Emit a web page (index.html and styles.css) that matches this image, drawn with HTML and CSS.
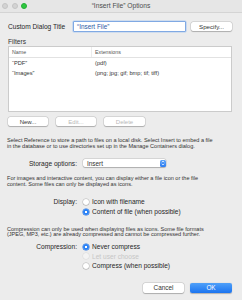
FILE: index.html
```html
<!DOCTYPE html>
<html>
<head>
<meta charset="utf-8">
<link rel="stylesheet" href="styles.css">
</head>
<body>
<div class="dialog">
  <div class="titlebar">
    <div class="lights">
      <span class="light grey"></span>
      <span class="light grey"></span>
      <span class="light green"></span>
    </div>
    <div class="title">“Insert File” Options</div>
    <div></div>
  </div>
  <div class="content">
    <div class="row-title">
      <span class="label">Custom Dialog Title</span>
      <span class="field"><span class="field-text">“Insert File”</span></span>
      <span class="btn specify">Specify...</span>
    </div>
    <div class="section">Filters</div>
    <div class="list">
      <div class="list-head">
        <span class="cell head-name">Name</span>
        <span class="cell">Extensions</span>
      </div>
      <div class="list-row">
        <span class="cell">“PDF”</span>
        <span class="cell">(pdf)</span>
      </div>
      <div class="list-row">
        <span class="cell">“Images”</span>
        <span class="cell">(png; jpg; gif; bmp; tif; tiff)</span>
      </div>
    </div>
    <div class="list-buttons">
      <span class="btn small">New...</span>
      <span class="btn small disabled">Edit...</span>
      <span class="btn small disabled wide">Delete</span>
    </div>
    <p class="note note1">Select Reference to store a path to files on a local disk. Select Insert to embed a file<br>in the database or to use directories set up in the Manage Containers dialog.</p>
    <div class="form-row storage">
      <span class="form-label">Storage options:</span>
      <span class="popup"><span class="popup-text">Insert</span><span class="stepper"><svg width="4" height="6" viewBox="0 0 4 6"><path d="M0.8 2.2 L2 1 L3.2 2.2 M0.8 3.8 L2 5 L3.2 3.8" fill="none" stroke="#fff" stroke-width="0.7"/></svg></span></span>
    </div>
    <p class="note note2">For images and interactive content, you can display either a file icon or the file<br>content. Some files can only be displayed as icons.</p>
    <div class="form-row radios display">
      <span class="form-label">Display:</span>
      <div class="radio-list">
        <span class="radio"><span class="dot"></span>Icon with filename</span>
        <span class="radio on"><span class="dot"></span>Content of file (when possible)</span>
      </div>
    </div>
    <p class="note note3">Compression can only be used when displaying files as icons. Some file formats<br>(JPEG, MP3, etc.) are already compressed and cannot be compressed further.</p>
    <div class="form-row radios compression">
      <span class="form-label">Compression:</span>
      <div class="radio-list">
        <span class="radio on"><span class="dot"></span>Never compress</span>
        <span class="radio off"><span class="dot"></span>Let user choose</span>
        <span class="radio"><span class="dot"></span>Compress (when possible)</span>
      </div>
    </div>
    <div class="footer">
      <span class="btn foot">Cancel</span>
      <span class="btn foot primary">OK</span>
    </div>
  </div>
</div>
</body>
</html>
```

FILE: styles.css
```css
html, body {
  margin: 0;
  padding: 0;
}
body {
  background: #ececec;
  font-family: "Liberation Sans", Arial, sans-serif;
  color: #262626;
}
.dialog {
  width: 242px;
  height: 300px;
  overflow: hidden;
  background: #ececec;
}
.titlebar {
  height: 12px;
  display: grid;
  grid-template-columns: 1fr auto 1fr;
  align-items: center;
  background: #e6e6e6;
  border-bottom: 1px solid #d4d4d4;
}
.lights {
  display: flex;
  gap: 3.5px;
  padding-left: 2px;
}
.light {
  width: 6px;
  height: 6px;
  border-radius: 50%;
  box-sizing: border-box;
}
.light.grey {
  background: #d3d3d3;
  border: 0.5px solid #c4c4c4;
}
.light.green {
  background: #2ec840;
  border: 0.5px solid #27ad36;
}
.title {
  font-size: 6.7px;
  color: #4d4d4d;
  line-height: 12px;
}
.content {
  padding: 0 10px 0 8px;
}
.row-title {
  display: flex;
  align-items: center;
  height: 11px;
  margin-top: 8px;
}
.label {
  font-size: 6.6px;
  width: 65px;
  white-space: nowrap;
}
.field {
  width: 113px;
  height: 11px;
  box-sizing: border-box;
  background: #fff;
  border: 1px solid #80a9e3;
  box-shadow: 0 0 0 0.6px #b4cdf0;
  border-radius: 1px;
  display: flex;
  align-items: center;
  padding-left: 3px;
}
.field-text {
  font-size: 6.4px;
  color: #2b5aa6;
}
.btn {
  display: flex;
  align-items: center;
  justify-content: center;
  background: #fff;
  border-radius: 2px;
  box-shadow: 0 0 0 0.5px rgba(0, 0, 0, 0.15), 0 0.5px 1px rgba(0, 0, 0, 0.2);
  font-size: 6.2px;
  color: #333;
  box-sizing: border-box;
}
.specify {
  width: 41px;
  height: 9px;
  margin-left: 5px;
}
.section {
  margin-top: 6px;
  line-height: 8px;
  font-size: 6.6px;
  color: #333;
}
.list {
  width: 224px;
  height: 66px;
  box-sizing: border-box;
  background: #fff;
  border: 1px solid #cbcbcb;
}
.list-head, .list-row {
  display: grid;
  grid-template-columns: 83px 1fr;
}
.list-head {
  height: 10px;
  line-height: 10px;
  border-bottom: 1px solid #e2e2e2;
  font-size: 5.3px;
  color: #555;
}
.head-name {
  border-right: 1px solid #ececec;
}
.list-row {
  height: 10px;
  line-height: 10px;
  font-size: 5.7px;
  color: #333;
}
.cell {
  padding-left: 3px;
  white-space: nowrap;
}
.list-buttons {
  display: flex;
  gap: 8px;
  margin-top: 5px;
}
.btn.small {
  width: 40px;
  height: 9px;
  font-size: 6px;
}
.btn.small.wide {
  width: 41px;
}
.btn.disabled {
  color: #b8b8b8;
}
.note {
  margin: 0;
  font-size: 5.55px;
  line-height: 5.6px;
  color: #333;
  margin-left: -1px;
  white-space: nowrap;
}
.note1 {
  margin-top: 12px;
}
.note2 {
  margin-top: 9px;
}
.note3 {
  margin-top: 10px;
}
.form-row {
  display: grid;
  grid-template-columns: 69px 1fr;
  column-gap: 6px;
  align-items: center;
}
.form-label {
  font-size: 6.6px;
  text-align: right;
  white-space: nowrap;
}
.storage {
  margin-top: 10px;
  height: 8px;
}
.popup {
  width: 83px;
  height: 8px;
  box-sizing: border-box;
  background: #fff;
  border-radius: 2px;
  box-shadow: 0 0 0 0.5px rgba(0, 0, 0, 0.15), 0 0.5px 1px rgba(0, 0, 0, 0.2);
  display: flex;
  align-items: center;
  justify-content: space-between;
  padding: 0 0.5px 0 4px;
}
.popup-text {
  font-size: 6.4px;
  color: #333;
}
.stepper {
  width: 5.5px;
  height: 7px;
  border-radius: 1.5px;
  background: linear-gradient(#5ea4f8, #2d7df1);
  display: flex;
  align-items: center;
  justify-content: center;
}
.radios {
  align-items: start;
}
.radios .form-label {
  line-height: 10px;
}
.display {
  margin-top: 9.5px;
}
.compression {
  margin-top: 4px;
}
.compression .radio, .compression .form-label {
  line-height: 9.5px;
  height: 9.5px;
}
.radio-list {
  display: flex;
  flex-direction: column;
}
.radio {
  display: flex;
  align-items: center;
  height: 10px;
  font-size: 6.6px;
  color: #262626;
  white-space: nowrap;
}
.dot {
  width: 6px;
  height: 6px;
  border-radius: 50%;
  box-sizing: border-box;
  background: #fff;
  box-shadow: 0 0 0 0.5px rgba(0, 0, 0, 0.22), 0 0.5px 0.8px rgba(0, 0, 0, 0.15);
  margin-right: 3px;
  flex: none;
}
.radio.on .dot {
  background: radial-gradient(circle, #fff 0 1.1px, #2a82f6 1.3px);
  box-shadow: 0 0 0 0.5px #1f6fe0;
}
.radio.off {
  color: #c6c6c6;
}
.radio.off .dot {
  background: #f3f3f3;
  box-shadow: 0 0 0 0.5px rgba(0, 0, 0, 0.08);
}
.footer {
  display: flex;
  justify-content: flex-end;
  gap: 6px;
  margin-top: 12px;
}
.btn.foot {
  width: 41px;
  height: 10px;
  font-size: 6.4px;
}
.btn.primary {
  width: 42px;
  background: linear-gradient(#4fa0f9, #1b74f0);
  color: #fff;
  box-shadow: 0 0.5px 1px rgba(0, 0, 0, 0.25);
}
```
